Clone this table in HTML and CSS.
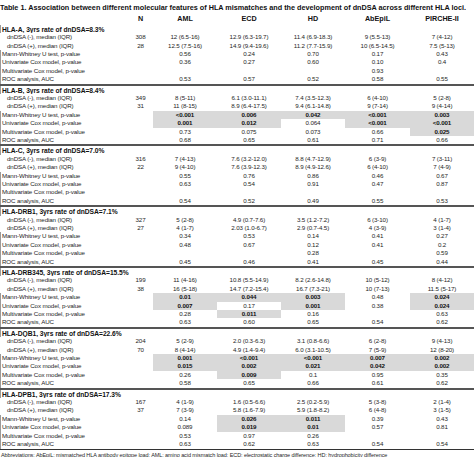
FILE: index.html
```html
<!DOCTYPE html>
<html>
<head>
<meta charset="utf-8">
<link rel="stylesheet" href="styles.css">
</head>
<body>
<div class="sheet">
  <div class="title">Table 1. Association between different molecular features of HLA mismatches and the development of dnDSA across different HLA loci.</div>
  <div class="row head"><span></span><span>N</span><span>AML</span><span>ECD</span><span>HD</span><span>AbEpiL</span><span>PIRCHE-II</span></div>

  <div class="sec">
    <div class="row sh"><span class="l bar">HLA-A, 3yrs rate of dnDSA=8.3%</span></div>
    <div class="row"><span class="l in">dnDSA (-), median (IQR)</span><span>308</span><span>12 (6.5-16)</span><span>12.9 (6.3-19.7)</span><span>11.4 (6.9-18.3)</span><span>9 (5.5-13)</span><span>7 (4-12)</span></div>
    <div class="row"><span class="l in">dnDSA (+), median (IQR)</span><span>28</span><span>12.5 (7.5-16)</span><span>14.9 (9.4-19.6)</span><span>11.2 (7.7-15.9)</span><span>10 (6.5-14.5)</span><span>7.5 (5-13)</span></div>
    <div class="row"><span class="l bar">Mann-Whitney U test, p-value</span><span></span><span>0.56</span><span>0.24</span><span>0.70</span><span>0.17</span><span>0.43</span></div>
    <div class="row"><span class="l bar">Univariate Cox model, p-value</span><span></span><span>0.36</span><span>0.27</span><span>0.60</span><span>0.10</span><span>0.4</span></div>
    <div class="row"><span class="l bar">Multivariate Cox model, p-value</span><span></span><span></span><span></span><span></span><span>0.93</span><span></span></div>
    <div class="row roc"><span class="l bar">ROC analysis, AUC</span><span></span><span>0.53</span><span>0.57</span><span>0.52</span><span>0.58</span><span>0.55</span></div>
  </div>

  <div class="sec">
    <div class="row sh"><span class="l bar">HLA-B, 3yrs rate of dnDSA=8.4%</span></div>
    <div class="row"><span class="l in">dnDSA (-), median (IQR)</span><span>349</span><span>8 (5-11)</span><span>6.1 (3.0-11.1)</span><span>7.4 (3.5-12.3)</span><span>6 (4-10)</span><span>5 (2-8)</span></div>
    <div class="row"><span class="l in">dnDSA (+), median (IQR)</span><span>31</span><span>11 (8-15)</span><span>8.9 (6.4-17.5)</span><span>9.4 (6.1-14.8)</span><span>9 (7-14)</span><span>9 (4-14)</span></div>
    <div class="row"><span class="l bar">Mann-Whitney U test, p-value</span><span></span><span class="hl">&lt;0.001</span><span class="hl">0.006</span><span class="hl">0.042</span><span class="hl">&lt;0.001</span><span class="hl">0.003</span></div>
    <div class="row"><span class="l bar">Univariate Cox model, p-value</span><span></span><span class="hl">0.001</span><span class="hl">0.012</span><span>0.064</span><span class="hl">&lt;0.001</span><span class="hl">&lt;0.001</span></div>
    <div class="row"><span class="l bar">Multivariate Cox model, p-value</span><span></span><span>0.73</span><span>0.075</span><span>0.073</span><span>0.66</span><span class="hl">0.025</span></div>
    <div class="row roc"><span class="l bar">ROC analysis, AUC</span><span></span><span>0.68</span><span>0.65</span><span>0.61</span><span>0.71</span><span>0.66</span></div>
  </div>

  <div class="sec">
    <div class="row sh"><span class="l bar">HLA-C, 3yrs rate of dnDSA=7.0%</span></div>
    <div class="row"><span class="l in">dnDSA (-), median (IQR)</span><span>316</span><span>7 (4-13)</span><span>7.6 (3.2-12.0)</span><span>8.8 (4.7-12.9)</span><span>6 (3-9)</span><span>7 (3-11)</span></div>
    <div class="row"><span class="l in">dnDSA (+), median (IQR)</span><span>22</span><span>9 (4-10)</span><span>7.6 (3.9-12.3)</span><span>8.9 (4.9-12.6)</span><span>6 (4-10)</span><span>7 (4-9)</span></div>
    <div class="row"><span class="l bar">Mann-Whitney U test, p-value</span><span></span><span>0.55</span><span>0.76</span><span>0.86</span><span>0.46</span><span>0.67</span></div>
    <div class="row"><span class="l bar">Univariate Cox model, p-value</span><span></span><span>0.63</span><span>0.54</span><span>0.91</span><span>0.47</span><span>0.87</span></div>
    <div class="row"><span class="l bar">Multivariate Cox model, p-value</span><span></span><span></span><span></span><span></span><span></span><span></span></div>
    <div class="row roc"><span class="l bar">ROC analysis, AUC</span><span></span><span>0.54</span><span>0.52</span><span>0.49</span><span>0.55</span><span>0.53</span></div>
  </div>

  <div class="sec">
    <div class="row sh"><span class="l bar">HLA-DRB1, 3yrs rate of dnDSA=7.1%</span></div>
    <div class="row"><span class="l in">dnDSA (-), median (IQR)</span><span>327</span><span>5 (2-8)</span><span>4.9 (0.7-7.6)</span><span>3.5 (1.2-7.2)</span><span>6 (3-10)</span><span>4 (1-7)</span></div>
    <div class="row"><span class="l in">dnDSA (+), median (IQR)</span><span>27</span><span>4 (1-7)</span><span>2.03 (1.0-6.7)</span><span>2.9 (0.7-4.5)</span><span>4 (3-9)</span><span>3 (1-4)</span></div>
    <div class="row"><span class="l bar">Mann-Whitney U test, p-value</span><span></span><span>0.34</span><span>0.53</span><span>0.14</span><span>0.41</span><span>0.27</span></div>
    <div class="row"><span class="l bar">Univariate Cox model, p-value</span><span></span><span>0.48</span><span>0.67</span><span>0.12</span><span>0.41</span><span>0.2</span></div>
    <div class="row"><span class="l bar">Multivariate Cox model, p-value</span><span></span><span></span><span></span><span>0.28</span><span></span><span>0.59</span></div>
    <div class="row roc"><span class="l bar">ROC analysis, AUC</span><span></span><span>0.45</span><span>0.46</span><span>0.41</span><span>0.45</span><span>0.44</span></div>
  </div>

  <div class="sec">
    <div class="row sh"><span class="l bar">HLA-DRB345, 3yrs rate of dnDSA=15.5%</span></div>
    <div class="row"><span class="l in">dnDSA (-), median (IQR)</span><span>199</span><span>11 (4-16)</span><span>10.8 (5.5-14.9)</span><span>8.2 (2.6-14.8)</span><span>10 (5-12)</span><span>8 (4-12)</span></div>
    <div class="row"><span class="l in">dnDSA (+), median (IQR)</span><span>38</span><span>16 (5-18)</span><span>14.7 (7.2-15.4)</span><span>16.7 (7.3-21)</span><span>10 (7-13)</span><span>11.5 (5-17)</span></div>
    <div class="row"><span class="l bar">Mann-Whitney U test, p-value</span><span></span><span class="hl">0.01</span><span class="hl">0.044</span><span class="hl">0.003</span><span>0.48</span><span class="hl">0.024</span></div>
    <div class="row"><span class="l bar">Univariate Cox model, p-value</span><span></span><span class="hl">0.007</span><span>0.17</span><span class="hl">0.001</span><span>0.38</span><span class="hl">0.024</span></div>
    <div class="row"><span class="l bar">Multivariate Cox model, p-value</span><span></span><span>0.28</span><span class="hl">0.011</span><span>0.16</span><span></span><span>0.63</span></div>
    <div class="row roc"><span class="l bar">ROC analysis, AUC</span><span></span><span>0.63</span><span>0.60</span><span>0.65</span><span>0.54</span><span>0.62</span></div>
  </div>

  <div class="sec">
    <div class="row sh"><span class="l bar">HLA-DQB1, 3yrs rate of dnDSA=22.6%</span></div>
    <div class="row"><span class="l in">dnDSA (-), median (IQR)</span><span>204</span><span>5 (2-9)</span><span>2.0 (0.3-6.3)</span><span>3.1 (0.8-6.6)</span><span>6 (2-8)</span><span>9 (4-13)</span></div>
    <div class="row"><span class="l in">dnDSA (+), median (IQR)</span><span>70</span><span>8 (4-14)</span><span>4.9 (1.4-9.4)</span><span>6.0 (3.1-10.5)</span><span>7 (5-9)</span><span>12 (8-20)</span></div>
    <div class="row"><span class="l bar">Mann-Whitney U test, p-value</span><span></span><span class="hl">0.001</span><span class="hl">&lt;0.001</span><span class="hl">&lt;0.001</span><span class="hl">0.007</span><span class="hl">0.002</span></div>
    <div class="row"><span class="l bar">Univariate Cox model, p-value</span><span></span><span class="hl">0.015</span><span class="hl">0.002</span><span class="hl">0.021</span><span class="hl">0.042</span><span class="hl">0.002</span></div>
    <div class="row"><span class="l bar">Multivariate Cox model, p-value</span><span></span><span>0.26</span><span class="hl">0.009</span><span>0.1</span><span>0.95</span><span>0.35</span></div>
    <div class="row roc"><span class="l bar">ROC analysis, AUC</span><span></span><span>0.58</span><span>0.65</span><span>0.66</span><span>0.61</span><span>0.62</span></div>
  </div>

  <div class="sec">
    <div class="row sh"><span class="l bar">HLA-DPB1, 3yrs rate of dnDSA=17.3%</span></div>
    <div class="row"><span class="l in">dnDSA (-), median (IQR)</span><span>167</span><span>4 (1-9)</span><span>1.6 (0.5-6.6)</span><span>2.5 (0.2-5.9)</span><span>5 (3-8)</span><span>2 (1-4)</span></div>
    <div class="row"><span class="l in">dnDSA (+), median (IQR)</span><span>37</span><span>7 (3-9)</span><span>5.8 (1.6-7.9)</span><span>5.9 (1.8-8.2)</span><span>6 (4-8)</span><span>3 (1-5)</span></div>
    <div class="row"><span class="l bar">Mann-Whitney U test, p-value</span><span></span><span>0.14</span><span class="hl">0.026</span><span class="hl">0.011</span><span>0.39</span><span>0.43</span></div>
    <div class="row"><span class="l bar">Univariate Cox model, p-value</span><span></span><span>0.089</span><span class="hl">0.019</span><span class="hl">0.01</span><span>0.57</span><span>0.81</span></div>
    <div class="row"><span class="l bar">Multivariate Cox model, p-value</span><span></span><span>0.53</span><span>0.97</span><span>0.26</span><span></span><span></span></div>
    <div class="row roc last"><span class="l bar">ROC analysis, AUC</span><span></span><span>0.63</span><span>0.62</span><span>0.63</span><span>0.54</span><span>0.54</span></div>
  </div>

  <div class="foot">Abbreviations: AbEpiL: mismatched HLA antibody epitope load; AML: amino acid mismatch load; ECD: electrostatic charge difference; HD: hydrophobicity difference</div>
</div>
</body>
</html>
```

FILE: styles.css
```css
html, body {
  margin: 0;
  padding: 0;
  background: #ffffff;
}

body {
  font-family: "Liberation Sans", Arial, sans-serif;
  color: #262626;
}

.sheet {
  width: 474px;
  height: 457px;
  overflow: hidden;
}

.title {
  height: 13px;
  line-height: 15px;
  font-size: 7.25px;
  font-weight: bold;
  color: #111111;
  white-space: nowrap;
}

.sec {
  display: grid;
  grid-template-rows: 8.4px 8.4px 8.4px 8.4px 8.4px 8.4px 10.4px;
  height: 60.8px;
}

.row {
  display: grid;
  grid-template-columns: 128px 25px 64px 64px 64px 65px 64px;
  height: 8.4px;
  line-height: 8.6px;
  font-size: 6.2px;
  letter-spacing: -0.12px;
  white-space: nowrap;
}

.row > span {
  text-align: center;
  overflow: hidden;
}

.row > .l {
  text-align: left;
}

.l.in {
  padding-left: 7px;
}

.l.bar {
  border-left: 1px solid #9a9a9a;
  padding-left: 1px;
}

.head {
  height: 11.8px;
  line-height: 11px;
  font-weight: bold;
  font-size: 7.2px;
  letter-spacing: 0;
  color: #111111;
}

.sh {
  font-weight: bold;
  font-size: 6.7px;
  line-height: 9px;
  letter-spacing: -0.05px;
  color: #111111;
}

.sh > .l {
  grid-column: 1 / -1;
}

.hl {
  background: #d9d9d9;
  font-weight: bold;
  color: #111111;
}

.roc {
  height: 10.4px;
  line-height: 8.6px;
  border-bottom: 2px solid #555555;
  box-sizing: border-box;
}

.roc.last {
  border-bottom: 1px solid #333333;
}

.foot {
  height: 9px;
  line-height: 11px;
  font-size: 5.5px;
  letter-spacing: -0.08px;
  white-space: nowrap;
  padding-left: 1px;
}
```
